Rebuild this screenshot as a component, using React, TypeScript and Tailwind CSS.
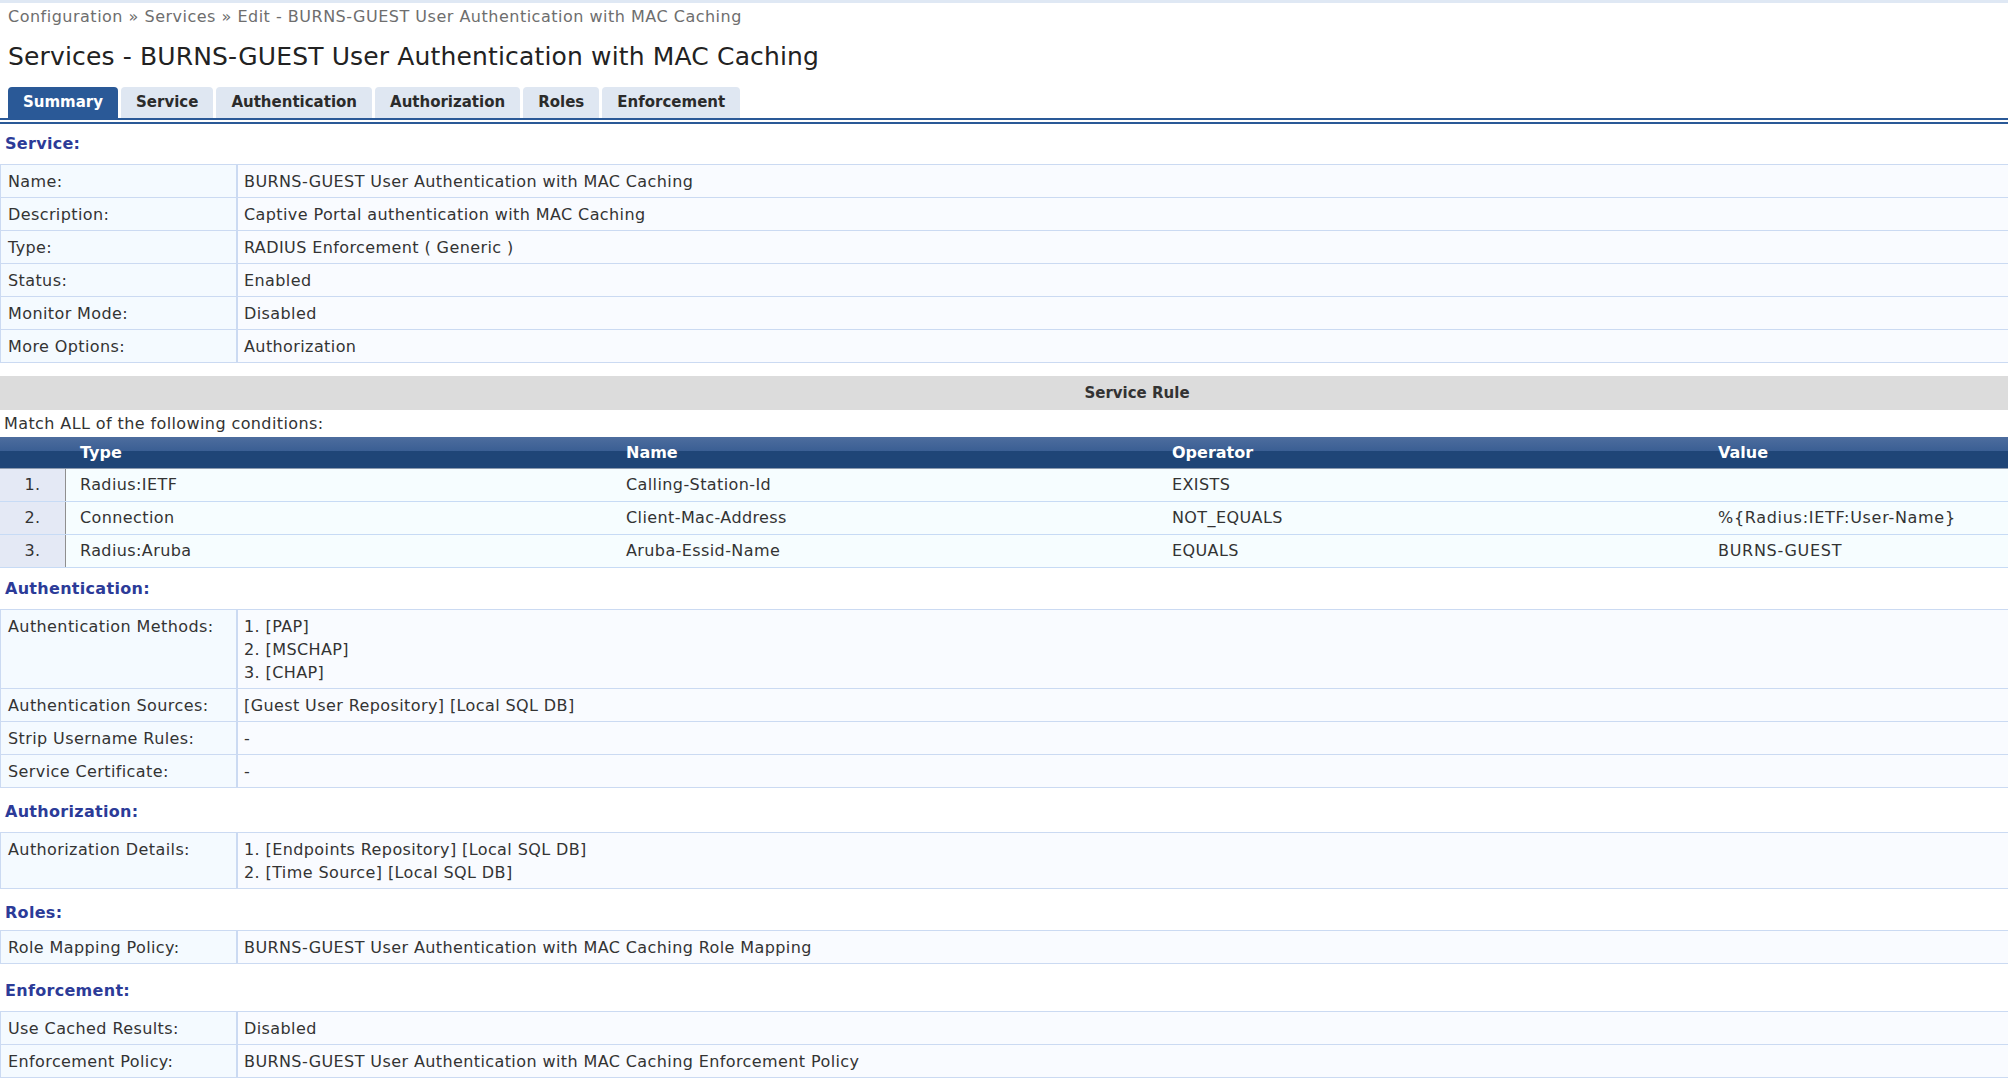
const tabs = ["Summary", "Service", "Authentication", "Authorization", "Roles", "Enforcement"];

type Row = { label: string; value: string[] };

const serviceRows: Row[] = [
  { label: "Name:", value: ["BURNS-GUEST User Authentication with MAC Caching"] },
  { label: "Description:", value: ["Captive Portal authentication with MAC Caching"] },
  { label: "Type:", value: ["RADIUS Enforcement ( Generic )"] },
  { label: "Status:", value: ["Enabled"] },
  { label: "Monitor Mode:", value: ["Disabled"] },
  { label: "More Options:", value: ["Authorization"] },
];

const authRows: Row[] = [
  { label: "Authentication Methods:", value: ["1. [PAP]", "2. [MSCHAP]", "3. [CHAP]"] },
  { label: "Authentication Sources:", value: ["[Guest User Repository] [Local SQL DB]"] },
  { label: "Strip Username Rules:", value: ["-"] },
  { label: "Service Certificate:", value: ["-"] },
];

const authzRows: Row[] = [
  {
    label: "Authorization Details:",
    value: ["1. [Endpoints Repository] [Local SQL DB]", "2. [Time Source] [Local SQL DB]"],
  },
];

const roleRows: Row[] = [
  { label: "Role Mapping Policy:", value: ["BURNS-GUEST User Authentication with MAC Caching Role Mapping"] },
];

const enfRows: Row[] = [
  { label: "Use Cached Results:", value: ["Disabled"] },
  { label: "Enforcement Policy:", value: ["BURNS-GUEST User Authentication with MAC Caching Enforcement Policy"] },
];

const conditions = [
  { type: "Radius:IETF", name: "Calling-Station-Id", op: "EXISTS", value: "" },
  { type: "Connection", name: "Client-Mac-Address", op: "NOT_EQUALS", value: "%{Radius:IETF:User-Name}" },
  { type: "Radius:Aruba", name: "Aruba-Essid-Name", op: "EQUALS", value: "BURNS-GUEST" },
];

function Heading({ title, pad }: { title: string; pad: string }) {
  return (
    <div className={`${pad} pl-[5px] text-[16px] font-bold leading-[20px] tracking-[0.3px] text-[#2c3b98]`}>
      {title}
    </div>
  );
}

function InfoTable({ rows }: { rows: Row[] }) {
  return (
    <div className="border-t border-[#cbdaf2]">
      {rows.map((r) => (
        <div key={r.label} className="grid grid-cols-[237px_1fr] border-b border-[#cbdaf2]">
          <div className="border-x border-[#cbdaf2] bg-[#f4faff] pl-[7px] pt-[5px] pb-[4px] leading-[23px]">
            {r.label}
          </div>
          <div className="border-l border-[#cbdaf2] bg-[#f9fbff] pl-[6px] pt-[5px] pb-[4px] leading-[23px]">
            {r.value.map((v) => (
              <div key={v}>{v}</div>
            ))}
          </div>
        </div>
      ))}
    </div>
  );
}

export default function App() {
  return (
    <div className="min-h-screen w-full overflow-hidden bg-white font-['DejaVu_Sans',Verdana,sans-serif] text-[16px] tracking-[0.4px] text-[#333]">
      <div className="w-[2274px]">
        <div className="h-[3px] bg-[#dfe8f4]" />
        <div className="pl-[8px] pt-[4px] leading-[20px] tracking-[0.5px] text-[#6e6e6e]">
          Configuration » Services » Edit - BURNS-GUEST User Authentication with MAC Caching
        </div>
        <h1 className="mt-[15px] pl-[8px] text-[25px] leading-[30px] tracking-[0.15px] text-[#222]">
          Services - BURNS-GUEST User Authentication with MAC Caching
        </h1>
        <div className="mt-[15px] flex items-end gap-[3px] pl-[8px] tracking-normal">
          {tabs.map((t, i) => (
            <div
              key={t}
              className={
                i === 0
                  ? "flex h-[31px] items-center rounded-t-[4px] bg-[#2a5997] px-[15px] text-[15px] font-bold text-white"
                  : "flex h-[31px] items-center rounded-t-[4px] bg-[#dfe7f2] px-[15px] text-[15px] font-bold text-[#2b2b2b]"
              }
            >
              {t}
            </div>
          ))}
        </div>
        <div className="h-[2px] bg-[#2a5997]" />
        <div className="h-[2px] bg-white" />
        <div className="h-[2px] bg-[#2a5997]" />

        <Heading title="Service:" pad="pt-[10px] pb-[10px]" />
        <InfoTable rows={serviceRows} />

        <div className="mt-[13px] flex h-[34px] items-center justify-center bg-[#dcdcdc] text-[15px] font-bold tracking-normal text-[#333]">
          Service Rule
        </div>
        <div className="pl-[4px] pt-[4px] pb-[3px] leading-[20px]">Match ALL of the following conditions:</div>

        <div className="grid h-[32px] grid-cols-[66px_546px_546px_546px_1fr] items-center border-b border-[#8d9bb0] bg-[linear-gradient(to_bottom,#4d6d9e_0%,#3b5f94_44%,#1f4577_44%,#1f4577_100%)] text-[16px] font-bold tracking-normal text-white">
          <div />
          <div className="pl-[14px]">Type</div>
          <div className="pl-[14px]">Name</div>
          <div className="pl-[14px]">Operator</div>
          <div className="pl-[14px]">Value</div>
        </div>
        {conditions.map((c, i) => (
          <div
            key={c.name}
            className="grid grid-cols-[66px_546px_546px_546px_1fr] border-b border-[#c7dbf5] bg-[#f6fdff] leading-[22px]"
          >
            <div className="border-r border-[#8f8f8f] bg-[#e4e9f5] py-[5px] text-center">{i + 1}.</div>
            <div className="py-[5px] pl-[14px]">{c.type}</div>
            <div className="py-[5px] pl-[14px]">{c.name}</div>
            <div className="py-[5px] pl-[14px]">{c.op}</div>
            <div className="py-[5px] pl-[14px] tracking-[0.7px]">{c.value}</div>
          </div>
        ))}

        <Heading title="Authentication:" pad="pt-[11px] pb-[10px]" />
        <InfoTable rows={authRows} />

        <Heading title="Authorization:" pad="pt-[14px] pb-[10px]" />
        <InfoTable rows={authzRows} />

        <Heading title="Roles:" pad="pt-[14px] pb-[7px]" />
        <InfoTable rows={roleRows} />

        <Heading title="Enforcement:" pad="pt-[17px] pb-[10px]" />
        <InfoTable rows={enfRows} />
      </div>
    </div>
  );
}
